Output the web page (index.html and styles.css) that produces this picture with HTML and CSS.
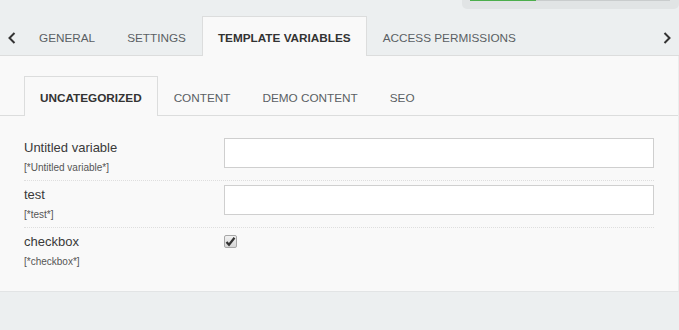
FILE: index.html
```html
<!DOCTYPE html>
<html>
<head>
<meta charset="utf-8">
<link rel="stylesheet" href="styles.css">
</head>
<body>
<div class="top">
  <div class="progress">
    <div class="progress-track"><div class="progress-fill" style="width:33%"></div></div>
  </div>
</div>
<div class="tabbar">
  <div class="arrow">
    <svg width="8" height="12" viewBox="0 0 8 12"><polyline points="6.5,1 1.5,6 6.5,11" fill="none" stroke="#333" stroke-width="2"/></svg>
  </div>
  <ul class="tabs">
    <li class="tab">GENERAL</li>
    <li class="tab">SETTINGS</li>
    <li class="tab active">TEMPLATE VARIABLES</li>
    <li class="tab">ACCESS PERMISSIONS</li>
  </ul>
  <div class="arrow arrow-right">
    <svg width="8" height="12" viewBox="0 0 8 12"><polyline points="1.5,1 6.5,6 1.5,11" fill="none" stroke="#333" stroke-width="2"/></svg>
  </div>
</div>
<div class="panel">
  <ul class="subtabs">
    <li class="tab active">UNCATEGORIZED</li>
    <li class="tab">CONTENT</li>
    <li class="tab">DEMO CONTENT</li>
    <li class="tab">SEO</li>
  </ul>
  <div class="form">
    <div class="row">
      <div class="label">
        <div class="name">Untitled variable</div>
        <div class="code">[*Untitled variable*]</div>
      </div>
      <div class="field"><input class="input" type="text"></div>
    </div>
    <div class="row">
      <div class="label">
        <div class="name">test</div>
        <div class="code">[*test*]</div>
      </div>
      <div class="field"><input class="input" type="text"></div>
    </div>
    <div class="row last">
      <div class="label">
        <div class="name">checkbox</div>
        <div class="code">[*checkbox*]</div>
      </div>
      <div class="field">
        <span class="checkbox">
          <svg width="11" height="11" viewBox="0 0 11 11"><path d="M1.5 6 L4 8.8 L9.5 1.8" fill="none" stroke="#333" stroke-width="2.2"/></svg>
        </span>
      </div>
    </div>
  </div>
</div>
</body>
</html>
```

FILE: styles.css
```css
* { box-sizing: border-box; }
html, body {
  margin: 0;
  padding: 0;
  background: #eceff0;
  font-family: "Liberation Sans", Arial, sans-serif;
  color: #333;
}
.top {
  display: flex;
  justify-content: flex-end;
  height: 9px;
}
.progress {
  width: 217px;
  height: 9px;
  background: #e1e4e5;
  border-radius: 0 0 5px 5px;
  padding: 0 9px 0 8px;
}
.progress-track {
  height: 1px;
  background: #c9cccd;
}
.progress-fill {
  height: 1px;
  background: #4cae4c;
}
.tabbar {
  margin-top: 7px;
  display: flex;
  align-items: stretch;
  height: 40px;
  border-bottom: 1px solid #dcdddd;
}
.arrow {
  width: 23px;
  display: flex;
  align-items: center;
  justify-content: center;
  padding-top: 4px;
}
.arrow-right {
  margin-left: auto;
  width: 24px;
  padding-right: 1px;
}
.tabs, .subtabs {
  list-style: none;
  margin: 0;
  padding: 0;
  display: flex;
}
.tab {
  font-size: 11.75px;
  color: #5a5f64;
  padding: 0 15px;
  border: 1px solid transparent;
  border-bottom: none;
  line-height: 42px;
  height: 40px;
  margin-bottom: -1px;
  white-space: nowrap;
}
.tab.active {
  font-weight: bold;
  color: #333;
  background: #f9f9f9;
  border-color: #dcdddd;
}
.panel {
  background: #f9f9f9;
  border-bottom: 1px solid #e2e4e5;
  border-right: 1px solid #ececec;
  padding-top: 20px;
}
.subtabs {
  padding-left: 24px;
  height: 40px;
  border-bottom: 1px solid #dcdddd;
}
.subtabs .tab {
  line-height: 42px;
}
.form {
  padding: 18px 24px 17px;
}
.row {
  display: flex;
  padding: 4px 0 6px;
  border-bottom: 1px dotted #dedede;
}
.row.last {
  border-bottom: none;
}
.label {
  width: 200px;
  flex: none;
}
.name {
  font-size: 13px;
  line-height: 19px;
  color: #3a3a3a;
}
.code {
  font-size: 10px;
  line-height: 12px;
  margin-top: 5px;
  color: #555;
}
.field {
  flex: 1;
}
.input {
  display: block;
  width: 100%;
  height: 30px;
  margin: 0;
  border: 1px solid #cfcfcf;
  background: #fff;
  padding: 0 8px;
  font: inherit;
}
.checkbox {
  display: flex;
  align-items: center;
  justify-content: center;
  width: 13px;
  height: 13px;
  margin-top: 3px;
  border: 1px solid #a7a7a7;
  border-radius: 2px;
  background: linear-gradient(#f2f2f2, #d6d6d6);
}
```
